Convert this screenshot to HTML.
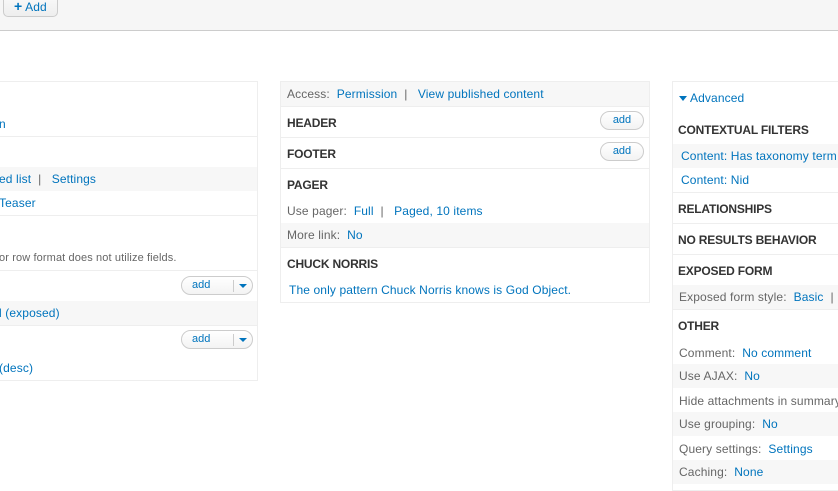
<!DOCTYPE html><html><head><style>
*{margin:0;padding:0;box-sizing:border-box}
body{width:838px;height:476px;overflow:hidden;background:#fff;font-family:"Liberation Sans",Arial,sans-serif;font-size:12px;color:#666;position:relative;letter-spacing:0.12px}
.a{position:absolute}
a{color:#0074bd;text-decoration:none}
.box{position:absolute;border:1px solid #eee;background:#fff}
.r{position:absolute;left:0;right:0;white-space:nowrap;line-height:14px}
.g{background:#f7f7f7}
.h{font-weight:bold;color:#333;font-size:12px;letter-spacing:-0.2px}
.bt{position:absolute;left:0;right:0;border-top:1px solid #eee;height:0}
.btn{position:absolute;border:1px solid #ccc;border-radius:10px;background:linear-gradient(#fff,#f3f3f3);color:#0074bd;font-size:11px;text-align:center;line-height:17px;height:19px;letter-spacing:0}
.dd{position:absolute;right:0;top:3px;width:19px;height:12px;border-left:1px solid #ccc}
.dd:after{content:"";position:absolute;left:5px;top:4px;border:4px solid transparent;border-top:4px solid #0074bd;border-bottom:0}
</style></head><body>
<div class="a" style="left:0;top:0;width:838px;height:31px;background:#f6f6f6;border-bottom:1px solid #ccc"></div>
<div class="a" style="left:3px;top:-6px;width:55px;height:23px;border:1px solid #ccc;border-radius:5px;background:linear-gradient(#fafafa,#eee);color:#0074bd;font-size:12px;line-height:22px;padding-left:10px"><b style="font-size:14px">+</b> Add</div>

<div class="box" style="left:-2px;top:81px;width:260px;height:300px">
<div class="r" style="top:35px"><a>n</a></div>
<div class="bt" style="top:54px"></div>
<div class="r g" style="top:85px;height:24px;line-height:24px"><a>ed list</a> &nbsp;| &nbsp; <a>Settings</a></div>
<div class="r" style="top:114px"><a>Teaser</a></div>
<div class="bt" style="top:133px"></div>
<div class="r" style="top:169px;font-size:11px">or row format does not utilize fields.</div>
<div class="bt" style="top:188px"></div>
<div class="btn" style="left:182px;top:194px;width:72px;text-align:left;padding-left:10px">add<span class="dd"></span></div>
<div class="r g" style="top:219px;height:24px;line-height:24px"><a>l (exposed)</a></div>
<div class="bt" style="top:243px"></div>
<div class="btn" style="left:182px;top:248px;width:72px;text-align:left;padding-left:10px">add<span class="dd"></span></div>
<div class="r" style="top:279px"><a>(desc)</a></div>
</div>

<div class="box" style="left:280px;top:81px;width:370px;height:222px">
<div class="r g" style="top:0;height:24px;line-height:24px;padding-left:6px">Access:&nbsp; <a>Permission</a> &nbsp;| &nbsp; <a>View published content</a></div>
<div class="bt" style="top:24px"></div>
<div class="r h" style="top:34px;padding-left:6px">HEADER</div>
<div class="btn" style="left:319px;top:29px;width:44px">add</div>
<div class="bt" style="top:55px"></div>
<div class="r h" style="top:65px;padding-left:6px">FOOTER</div>
<div class="btn" style="left:319px;top:60px;width:44px">add</div>
<div class="bt" style="top:86px"></div>
<div class="r h" style="top:96px;padding-left:6px">PAGER</div>
<div class="r" style="top:122px;padding-left:6px">Use pager:&nbsp; <a>Full</a> &nbsp;| &nbsp; <a>Paged, 10 items</a></div>
<div class="r g" style="top:141px;height:24px;line-height:24px;padding-left:6px">More link:&nbsp; <a>No</a></div>
<div class="bt" style="top:165px"></div>
<div class="r h" style="top:175px;padding-left:6px">CHUCK NORRIS</div>
<div class="r" style="top:201px;padding-left:8px"><a>The only pattern Chuck Norris knows is God Object.</a></div>
</div>

<div class="box" style="left:672px;top:81px;width:180px;height:410px">
<div class="r" style="top:9px;padding-left:6px"><a><span style="display:inline-block;border:4px solid transparent;border-top:5px solid #0074bd;border-bottom:0;vertical-align:middle;margin-right:3px"></span>Advanced</a></div>
<div class="r h" style="top:41px;padding-left:5px">CONTEXTUAL FILTERS</div>
<div class="r g" style="top:62px;height:24px;line-height:24px;padding-left:8px"><a>Content: Has taxonomy term</a></div>
<div class="r" style="top:91px;padding-left:8px"><a>Content: Nid</a></div>
<div class="bt" style="top:110px"></div>
<div class="r h" style="top:120px;padding-left:5px">RELATIONSHIPS</div>
<div class="bt" style="top:141px"></div>
<div class="r h" style="top:151px;padding-left:5px">NO RESULTS BEHAVIOR</div>
<div class="bt" style="top:172px"></div>
<div class="r h" style="top:182px;padding-left:5px">EXPOSED FORM</div>
<div class="r g" style="top:203px;height:24px;line-height:24px;padding-left:6px">Exposed form style:&nbsp; <a>Basic</a> &nbsp;|</div>
<div class="bt" style="top:227px"></div>
<div class="r h" style="top:237px;padding-left:5px">OTHER</div>
<div class="r" style="top:264px;padding-left:6px">Comment:&nbsp; <a>No comment</a></div>
<div class="r g" style="top:282px;height:24px;line-height:24px;padding-left:6px">Use AJAX:&nbsp; <a>No</a></div>
<div class="r" style="top:312px;padding-left:6px">Hide attachments in summary</div>
<div class="r g" style="top:330px;height:24px;line-height:24px;padding-left:6px">Use grouping:&nbsp; <a>No</a></div>
<div class="r" style="top:360px;padding-left:6px">Query settings:&nbsp; <a>Settings</a></div>
<div class="r g" style="top:378px;height:24px;line-height:24px;padding-left:6px">Caching:&nbsp; <a>None</a></div>
</div>
</body></html>
